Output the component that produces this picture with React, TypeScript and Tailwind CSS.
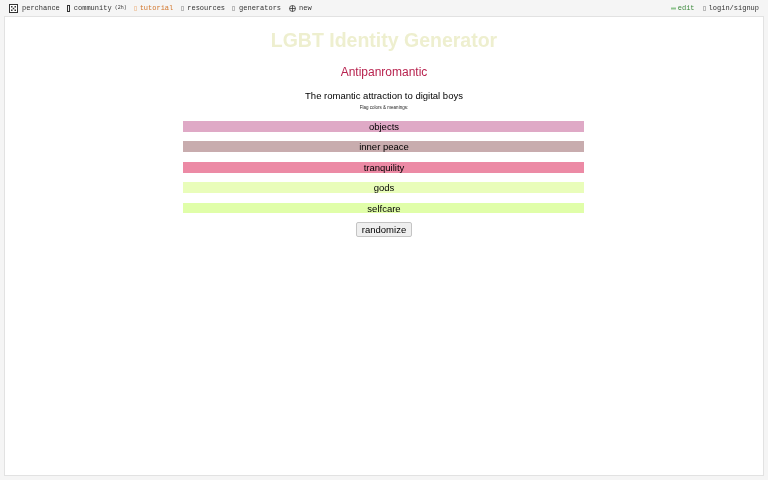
const sans = "font-['Liberation_Sans',Arial,sans-serif]";

const meanings = [
    { label: 'objects', color: 'bg-[#dfa9c6]' },
    { label: 'inner peace', color: 'bg-[#c8acae]' },
    { label: 'tranquility', color: 'bg-[#ec8aa5]' },
    { label: 'gods', color: 'bg-[#e9fdba]' },
    { label: 'selfcare', color: 'bg-[#e0fea9]' },
];

// missing-glyph box, the page's emoji icons render as these
const Tofu = ({ className }: { className: string }) => (
    <span className={`inline-block border-[0.75px] border-current ${className}`} />
);

const Dice = () => (
    <svg width="9" height="9" viewBox="0 0 9 9" className="shrink-0">
        <rect x="0.5" y="0.5" width="8" height="8" fill="#fff" stroke="#333" />
        <rect x="2" y="2" width="1.5" height="1.5" fill="#333" />
        <rect x="5.5" y="2" width="1.5" height="1.5" fill="#333" />
        <rect x="3.75" y="3.75" width="1.5" height="1.5" fill="#333" />
        <rect x="2" y="5.5" width="1.5" height="1.5" fill="#333" />
        <rect x="5.5" y="5.5" width="1.5" height="1.5" fill="#333" />
    </svg>
);

const Plus = () => (
    <svg width="7" height="7" viewBox="0 0 8 8" className="shrink-0" fill="none" stroke="#333" strokeWidth="0.9">
        <circle cx="4" cy="4" r="3.4" />
        <path d="M4 0.6V7.4M0.6 4H7.4" />
    </svg>
);

const Pencil = () => (
    <svg width="5" height="3" viewBox="0 0 5 3" className="shrink-0">
        <path d="M0 0.5h5v2H0z" fill="#8fc48f" />
    </svg>
);

export default function App() {
    return (
        <div className="flex h-[480px] w-[768px] flex-col overflow-hidden bg-[#f5f5f5]">
            <nav className="flex h-4 shrink-0 items-center justify-between pt-[1px] pl-[9px] pr-[9px] font-['Liberation_Mono',monospace] text-[7px] text-[#333] will-change-transform">
                <div className="flex items-center">
                    <div className="flex items-center gap-1">
                        <Dice />
                        <span>perchance</span>
                    </div>
                    <div className="ml-[7px] flex items-center gap-1">
                        <Tofu className="h-[7px] w-[3px] text-[#333]" />
                        <span>community</span>
                        <span className="-ml-[1px] text-[5px]">(2h)</span>
                    </div>
                    <div className="ml-[7px] flex items-center gap-[3px] text-[#d2772e]">
                        <Tofu className="h-[5px] w-[3px] text-[#f0d2b8]" />
                        <span>tutorial</span>
                    </div>
                    <div className="ml-2 flex items-center gap-[3px]">
                        <Tofu className="h-[5px] w-[3px] text-[#bbb]" />
                        <span>resources</span>
                    </div>
                    <div className="ml-[7px] flex items-center gap-1">
                        <Tofu className="h-[5px] w-[3px] text-[#bbb]" />
                        <span>generators</span>
                    </div>
                    <div className="ml-2 flex items-center gap-[3px]">
                        <Plus />
                        <span>new</span>
                    </div>
                </div>
                <div className="flex items-center">
                    <div className="flex items-center gap-[2px] text-[#3c8a3c]">
                        <Pencil />
                        <span>edit</span>
                    </div>
                    <div className="ml-2 flex items-center gap-[3px]">
                        <Tofu className="h-[5px] w-[3px] text-[#bbb]" />
                        <span>login/signup</span>
                    </div>
                </div>
            </nav>
            <main className={`mx-[4px] mb-[4px] flex-1 border border-[#e2e2e2] bg-white ${sans}`}>
                <div className="flex flex-col items-center will-change-transform">
                    <h1 className="mt-[10px] text-[19.5px] leading-[26px] font-bold text-[#eeefcf]">LGBT Identity Generator</h1>
                    <div className="mt-3 text-xs leading-[14px] text-[#b8234f]">Antipanromantic</div>
                    <p className="mt-[11px] text-[9.5px] leading-[12px] text-black">The romantic attraction to digital boys</p>
                    <p className="mt-[3px] text-[4.5px] leading-[6px] text-[#222]">Flag colors &amp; meanings:</p>
                    <div className="mt-[10px] flex w-[402px] flex-col gap-[9.6px] pr-[1px]">
                        {meanings.map((m) => (
                            <div key={m.label} className={`h-[10.8px] pl-[1px] text-center text-[9.5px] leading-[11.6px] text-black ${m.color}`}>
                                {m.label}
                            </div>
                        ))}
                    </div>
                    <button className="mt-[9px] h-[15px] w-14 rounded-[2px] border border-[#c4c4c4] bg-[#efefef] text-[9.5px] leading-[13px] text-black">
                        randomize
                    </button>
                </div>
            </main>
        </div>
    );
}
